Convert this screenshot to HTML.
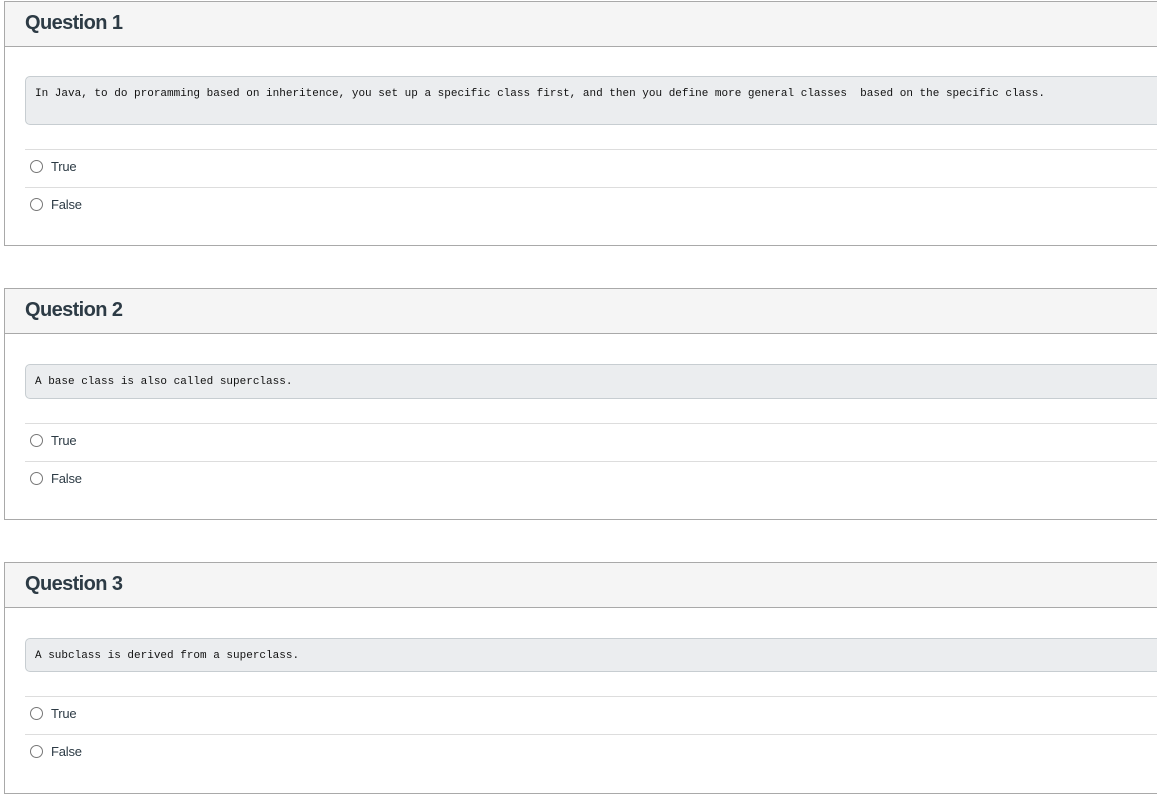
<!DOCTYPE html>
<html><head><style>
body{margin:0;background:#fff;width:1157px;height:770px;overflow:hidden;position:relative;font-family:"Liberation Sans",sans-serif;color:#2d3b45}
.q{position:absolute;left:4px;width:1160px;border:1px solid #a9a9a9;background:#fff}
.h{height:44px;background:#f5f5f5;border-bottom:1px solid #a9a9a9;position:relative}
.h span{position:absolute;left:20px;top:10px;font-size:20px;font-weight:bold;letter-spacing:-0.6px;color:#2d3b45}
.code{position:absolute;left:20px;width:1140px;background:#ebedef;border:1px solid #c7cdd1;border-radius:5px;box-sizing:border-box;font-family:"Liberation Mono",monospace;font-size:11px;color:#111;padding-left:9px}
.line{position:absolute;left:20px;right:0;border-top:1px solid #ddd}
.opt{position:absolute;left:25px;font-size:13px;color:#2d3b45;letter-spacing:-0.2px}
.opt i{display:inline-block;width:11px;height:11px;border:1px solid #777;border-radius:50%;vertical-align:-2px;margin-right:8px}
</style></head><body>

<div class="q" style="top:1px;height:243px">
<div class="h"><span>Question 1</span></div>
<div class="code" style="top:74px;height:49px;padding-top:11px">In Java, to do proramming based on inheritence, you set up a specific class first, and then you define more general classes &nbsp;based on the specific class.</div>
<div class="line" style="top:147px"></div>
<div class="opt" style="top:157px"><i></i>True</div>
<div class="line" style="top:185px"></div>
<div class="opt" style="top:195px"><i></i>False</div>
</div>

<div class="q" style="top:288px;height:230px">
<div class="h"><span>Question 2</span></div>
<div class="code" style="top:75px;height:35px;padding-top:11px">A base class is also called superclass.</div>
<div class="line" style="top:134px"></div>
<div class="opt" style="top:144px"><i></i>True</div>
<div class="line" style="top:172px"></div>
<div class="opt" style="top:182px"><i></i>False</div>
</div>

<div class="q" style="top:562px;height:230px">
<div class="h"><span>Question 3</span></div>
<div class="code" style="top:75px;height:34px;padding-top:11px">A subclass is derived from a superclass.</div>
<div class="line" style="top:133px"></div>
<div class="opt" style="top:143px"><i></i>True</div>
<div class="line" style="top:171px"></div>
<div class="opt" style="top:181px"><i></i>False</div>
</div>

</body></html>
